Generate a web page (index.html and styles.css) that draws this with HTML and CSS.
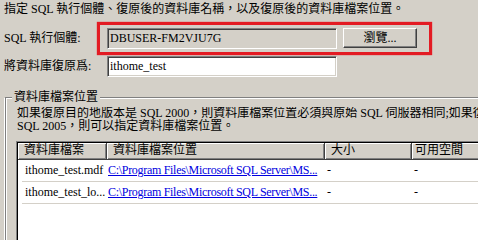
FILE: index.html
```html
<!DOCTYPE html>
<html lang="zh-Hant">
<head>
    <meta charset="UTF-8">
    <title>還原資料庫</title>
    <link rel="stylesheet" href="styles.css">
</head>
<body>
    <div class="dialog">
        <p class="intro">指定 SQL 執行個體、復原後的資料庫名稱，以及復原後的資料庫檔案位置。</p>

        <div class="field-row">
            <label class="field-label">SQL 執行個體:</label>
            <div class="textbox disabled">DBUSER-FM2VJU7G</div>
            <button class="btn">瀏覽...</button>
        </div>
        <div class="field-row second">
            <label class="field-label">將資料庫復原爲:</label>
            <div class="textbox">ithome_test</div>
        </div>

        <fieldset class="group">
            <legend>資料庫檔案位置</legend>
            <p class="note">如果復原目的地版本是 SQL 2000，則資料庫檔案位置必須與原始 SQL 伺服器相同;如果復原目的地版本是<br>SQL 2005，則可以指定資料庫檔案位置。</p>

            <div class="listview">
                <div class="listview-inner">
                    <div class="lv-header">
                        <div class="lv-col">資料庫檔案</div>
                        <div class="lv-col">資料庫檔案位置</div>
                        <div class="lv-col">大小</div>
                        <div class="lv-col last">可用空間</div>
                    </div>
                    <div class="lv-row">
                        <div class="lv-cell">ithome_test.mdf</div>
                        <div class="lv-cell"><a href="#" class="path">C:\Program Files\Microsoft SQL Server\MS...</a></div>
                        <div class="lv-cell">-</div>
                        <div class="lv-cell">-</div>
                    </div>
                    <div class="lv-row">
                        <div class="lv-cell">ithome_test_lo...</div>
                        <div class="lv-cell"><a href="#" class="path">C:\Program Files\Microsoft SQL Server\MS...</a></div>
                        <div class="lv-cell">-</div>
                        <div class="lv-cell">-</div>
                    </div>
                </div>
            </div>
        </fieldset>

        <!-- red annotation box around the instance field -->
        <div class="highlight"></div>
    </div>
</body>
</html>
```

FILE: styles.css
```css
* {
    margin: 0;
    padding: 0;
    box-sizing: border-box;
}

body {
    font-family: "Liberation Serif", "Noto Sans CJK TC", serif;
    font-size: 12px;
    color: #000;
    background: #d4d0c8;
    width: 478px;
    height: 240px;
    overflow: hidden;
}

.dialog {
    position: relative;
    padding: 2px 0 0 4px;
    width: 478px;
    height: 240px;
    overflow: hidden;
}

.intro {
    line-height: 14px;
    white-space: nowrap;
}

.field-row {
    display: flex;
    align-items: flex-start;
    margin-top: 12px;
    height: 21px;
}

.field-row.second {
    margin-top: 7px;
}

.field-label {
    width: 103px;
    line-height: 21px;
    white-space: nowrap;
}

.textbox {
    width: 230px;
    height: 21px;
    padding-left: 2px;
    line-height: 19px;
    background: #fff;
    border: 1px solid;
    border-color: #808080 #fff #fff #808080;
    box-shadow: inset 1px 1px 0 #404040, inset -1px -1px 0 #d4d0c8;
    white-space: nowrap;
}

.textbox.disabled {
    background: #d4d0c8;
}

.btn {
    margin-left: 6px;
    width: 74px;
    height: 20px;
    font: inherit;
    line-height: 17px;
    background: #d4d0c8;
    border: 1px solid;
    border-color: #fff #404040 #404040 #fff;
    box-shadow: inset -1px -1px 0 #808080;
}

.group {
    margin: 13px 0 0 1px;
    width: 460px;
    height: 200px;
    padding: 0 0 0 10px;
    border: 1px solid #808080;
    border-right: 0;
    box-shadow: inset 1px 1px 0 #fff, -1px 1px 0 #fff;
    overflow: hidden;
}

.group legend {
    margin-left: -4px;
    padding: 0 2px;
    line-height: 14px;
    background: #d4d0c8;
}

.note {
    margin: 3px 0 0 1px;
    line-height: 13px;
    white-space: nowrap;
    overflow: hidden;
}

.listview {
    margin-top: 8px;
    width: 600px;
    height: 120px;
    border: 1px solid;
    border-color: #808080 #fff #fff #808080;
}

.listview-inner {
    height: 100%;
    background: #fff;
    border: 1px solid;
    border-color: #000 #d4d0c8 #d4d0c8 #000;
}

.lv-header {
    display: grid;
    grid-template-columns: 89px 218px 87px 200px;
    height: 17px;
}

.lv-col {
    padding-left: 6px;
    line-height: 15px;
    background: #d4d0c8;
    border-right: 1px solid #404040;
    border-bottom: 1px solid #404040;
    box-shadow: inset 1px 1px 0 #fff, inset -1px -1px 0 #808080;
    white-space: nowrap;
}

.lv-col.last {
    padding-left: 3px;
}

.lv-row {
    display: grid;
    grid-template-columns: 85px 219px 87px 200px;
    margin-left: 4px;
    height: 22px;
    border-bottom: 1px solid #d4d0c8;
}

.lv-cell {
    padding: 3px 0 0 3px;
    line-height: 14px;
    white-space: nowrap;
    overflow: hidden;
}

.lv-cell + .lv-cell {
    padding-left: 1px;
}

.path {
    color: #0000e0;
    text-decoration: underline;
    letter-spacing: -0.3px;
}

.highlight {
    position: absolute;
    left: 97px;
    top: 22px;
    width: 335px;
    height: 33px;
    border: 3px solid #e31b23;
    box-shadow: 0 0 1px #e31b23;
}
```
